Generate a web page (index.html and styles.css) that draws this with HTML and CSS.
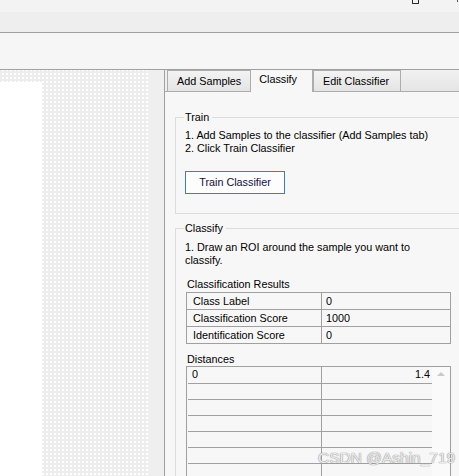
FILE: index.html
```html
<!DOCTYPE html>
<html>
<head>
<meta charset="utf-8">
<link rel="stylesheet" href="styles.css">
</head>
<body>
<div class="app">
  <div class="titlebar"><span class="ticon"></span><span class="tmark"></span></div>
  <div class="toolbar"></div>
  <div class="ribbon"></div>
  <div class="main">
    <div class="canvas">
      <div class="pattern"><div class="image"></div></div>
      <div class="splitter"></div>
    </div>
    <div class="side">
      <div class="tabs">
        <div class="tab">Add Samples</div>
        <div class="tab active">Classify</div>
        <div class="tab wide">Edit Classifier</div>
        <div class="tab filler"></div>
      </div>
      <div class="panel">
        <div class="group train">
          <div class="gtitle">Train</div>
          <div class="gtext">1. Add Samples to the classifier (Add Samples tab)<br>2. Click Train Classifier</div>
          <div class="btn">Train Classifier</div>
        </div>
        <div class="group classify">
          <div class="gtitle">Classify</div>
          <div class="gtext">1. Draw an ROI around the sample you want to<br>classify.</div>
          <div class="label results-label">Classification Results</div>
          <div class="table results">
            <div class="row"><div class="c1">Class Label</div><div class="c2">0</div></div>
            <div class="row"><div class="c1">Classification Score</div><div class="c2">1000</div></div>
            <div class="row"><div class="c1">Identification Score</div><div class="c2">0</div></div>
          </div>
          <div class="label dist-label">Distances</div>
          <div class="table dist">
            <div class="rows">
              <div class="row"><div class="c1">0</div><div class="c2 num">1.4</div></div>
              <div class="row"><div class="c1"></div><div class="c2"></div></div>
              <div class="row"><div class="c1"></div><div class="c2"></div></div>
              <div class="row"><div class="c1"></div><div class="c2"></div></div>
              <div class="row"><div class="c1"></div><div class="c2"></div></div>
              <div class="row"><div class="c1"></div><div class="c2"></div></div>
              <div class="row"><div class="c1"></div><div class="c2"></div></div>
            </div>
            <div class="scroll"><span class="arrow"></span></div>
          </div>
        </div>
      </div>
    </div>
  </div>
  <div class="watermark">CSDN @Ashin_719</div>
</div>
</body>
</html>
```
FILE: styles.css
```css
html, body {
  margin: 0;
  padding: 0;
}
body {
  width: 459px;
  height: 476px;
  overflow: hidden;
  background: #f7f7f7;
  font-family: "Liberation Sans", Arial, sans-serif;
  font-size: 10.8px;
  color: #000;
}
.app {
  position: relative;
  width: 459px;
  height: 476px;
  overflow: hidden;
}
.titlebar {
  height: 12px;
  background: #f3f3f3;
  display: flex;
  align-items: flex-start;
}
.ticon {
  margin-left: 412px;
  width: 5px;
  height: 3px;
  border: 1px solid #2b2b2b;
  border-top: none;
  border-radius: 0 0 1px 1px;
}
.tmark {
  margin-left: 38px;
  width: 1px;
  height: 2px;
  background: #555;
}
.toolbar {
  height: 20px;
  background: #eeeeee;
  border-bottom: 1px solid #a0a0a0;
}
.ribbon {
  height: 36px;
  background: #f6f6f6;
  border-bottom: 1px solid #a0a0a0;
}
.main {
  display: flex;
  height: 406px;
}
.canvas {
  display: flex;
  width: 164px;
  flex: none;
}
.pattern {
  width: 148px;
  padding-top: 12px;
  background-color: #fff;
  background-image:
    linear-gradient(to right, transparent 2px, #ededed 2px),
    linear-gradient(to bottom, transparent 2px, #ededed 2px);
  background-size: 4px 4px;
  background-position: 2px 3px;
}
.image {
  width: 42px;
  height: 400px;
  background: #fff;
}
.splitter {
  flex: 1;
  background: #efefef;
}
.side {
  flex: 1;
  border-left: 1px solid #a0a0a0;
  overflow: hidden;
  background: #f7f7f7;
}
.tabs {
  display: flex;
  height: 21px;
  padding-left: 2px;
  background: #efefef;
  position: relative;
  z-index: 1;
}
.tab {
  box-sizing: border-box;
  height: 21px;
  border: 1px solid #acacac;
  border-bottom: none;
  background: linear-gradient(#f3f3f3, #e4e4e4);
  padding: 0 9px 0 9px;
  line-height: 21px;
  white-space: nowrap;
}
.tab + .tab {
  border-left: none;
}
.tab.wide {
  padding: 0 11px 0 9px;
}
.tab.active {
  height: 23px;
  margin-top: -1px;
  margin-bottom: -1px;
  background: #f7f7f7;
  border: 1px solid #acacac;
  border-bottom: none;
  border-left: none;
  padding: 0 15px 0 8px;
  line-height: 19px;
}
.tab.active + .tab {
  border-left: 1px solid #acacac;
}
.tab.filler {
  flex: 1;
  border-right: none;
  background: linear-gradient(#f1f1f1, #e5e5e5);
  margin-top: -1px;
  height: 22px;
  padding: 0;
}
.panel {
  border-top: 1px solid #acacac;
  padding: 25px 0 0 10px;
}
.group {
  width: 320px;
  border: 1px solid #dcdcdc;
  border-right: none;
  padding-left: 9px;
}
.gtitle {
  width: fit-content;
  margin-top: -8px;
  margin-left: -1px;
  padding: 0 3px 0 1px;
  line-height: 14px;
  height: 14px;
  background: #f7f7f7;
}
.gtext {
  margin-top: 5px;
  line-height: 13px;
}
.train {
  padding-bottom: 19px;
}
.btn {
  box-sizing: border-box;
  margin-top: 16px;
  width: 100px;
  height: 23px;
  border: 1px solid #3c7fc0;
  background: #fdfdfd;
  color: #10103a;
  text-align: center;
  line-height: 21px;
}
.classify {
  margin-top: 14px;
  height: 400px;
}
.classify .gtext {
  margin-top: 6px;
}
.label {
  margin-left: 2px;
  line-height: 14px;
}
.results-label {
  margin-top: 10px;
  margin-bottom: 1px;
}
.table {
  width: 265px;
  box-sizing: border-box;
  border: 1px solid #a0a0a0;
  margin-left: 1px;
}
.row {
  display: flex;
  height: 16px;
  line-height: 16px;
}
.results .row + .row {
  border-top: 1px solid #a0a0a0;
}
.c1 {
  width: 128px;
  padding-left: 6px;
  white-space: nowrap;
}
.c2 {
  flex: 1;
  border-left: 1px solid #a0a0a0;
  padding-left: 4px;
}
.dist-label {
  margin-top: 8px;
}
.dist {
  display: flex;
  height: 120px;
}
.rows {
  flex: 1;
  padding-left: 1px;
}
.dist .row {
  height: 15px;
  line-height: 15px;
  border-bottom: 1px solid #a0a0a0;
}
.dist .row:first-child {
  height: 16px;
}
.dist .c1 {
  width: 129px;
  padding-left: 4px;
}
.num {
  text-align: right;
  padding-right: 2px;
}
.scroll {
  width: 18px;
  background: #fafafa;
  display: flex;
  justify-content: center;
  padding-top: 5px;
}
.arrow {
  width: 0;
  height: 0;
  border-left: 4px solid transparent;
  border-right: 4px solid transparent;
  border-bottom: 4px solid #c8c8c8;
}
.watermark {
  position: absolute;
  left: 318px;
  top: 449px;
  font-family: "Liberation Sans", sans-serif;
  font-size: 15.5px;
  color: rgba(255, 255, 255, 0.85);
  text-shadow: 0 0 1px #8a8a8a, 0 0 1px #8a8a8a;
  white-space: nowrap;
}
```
